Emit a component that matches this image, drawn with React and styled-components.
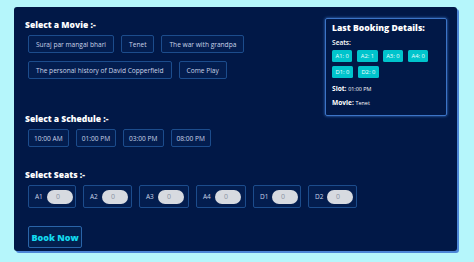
import React from 'react'
import styled, { createGlobalStyle } from 'styled-components'

const GlobalStyle = createGlobalStyle`
  html, body {
    margin: 0;
    padding: 0;
    background: #b5f6fb;
    font-family: "Open Sans", Inter, sans-serif;
  }
`

const Page = styled.div`
  padding: 7px 0 0 14px;
  width: 474px;
  height: 262px;
  box-sizing: border-box;
`

const Card = styled.div`
  width: 443px;
  height: 244px;
  box-sizing: border-box;
  background: #011847;
  border-radius: 3px;
  box-shadow: 2px 2px 0 #4d86d6;
  padding: 11px 10px 0 11px;
  display: flex;
  justify-content: space-between;
  align-items: flex-start;
  color: #fff;
`

const Main = styled.div`
  display: flex;
  flex-direction: column;
  width: 290px;
  flex-shrink: 0;
`

const Heading = styled.h3`
  margin: ${(p) => p.$top || 1}px 0 4px;
  font-size: 8.5px;
  line-height: 12px;
  font-weight: 800;
`

const Options = styled.div`
  display: flex;
  flex-wrap: wrap;
  gap: 8px 7px;
  padding-left: 3px;
  max-width: 230px;
`

const Option = styled.button`
  height: 18px;
  padding: 0 ${(p) => (p.$narrow ? 5 : 7)}px;
  background: #031d4f;
  border: 1px solid #1c4c8c;
  border-radius: 2px;
  color: #c9d3e8;
  font-family: inherit;
  font-size: 6.6px;
  white-space: nowrap;
  box-sizing: border-box;
`

const Seats = styled.div`
  display: flex;
  gap: 7px;
  padding-left: 3px;
`

const SeatBox = styled.div`
  width: ${(p) => p.$w}px;
  flex-shrink: 0;
  height: 23px;
  box-sizing: border-box;
  border: 1px solid #1c4c8c;
  border-radius: 2px;
  background: #031d4f;
  display: flex;
  align-items: center;
  padding-left: 6px;
  gap: 3px;
  font-size: 6.5px;
  color: #c9d3e8;
`

const SeatLabel = styled.span`
  width: 9px;
`

const SeatInput = styled.div`
  width: 26px;
  height: 14px;
  border-radius: 7px;
  background: #d7dae0;
  color: #8a93a4;
  font-size: 7px;
  line-height: 14px;
  padding-left: 9px;
  box-sizing: border-box;
`

const BookButton = styled.button`
  margin: 18px 0 0 3px;
  width: 54px;
  height: 22px;
  box-sizing: border-box;
  background: #03204f;
  border: 1px solid #2a64a8;
  border-radius: 2px;
  color: #13d9ee;
  font-family: inherit;
  font-weight: 800;
  font-size: 9px;
  padding: 0;
`

const Panel = styled.div`
  width: 122px;
  height: 98px;
  flex-shrink: 0;
  box-sizing: border-box;
  border: 1.5px solid #3c74c6;
  border-radius: 2px;
  box-shadow: 0 0 3px #3f7ad0;
  padding: 3px 6px;
`

const PanelTitle = styled.div`
  font-size: 8.6px;
  font-weight: 800;
  line-height: 13px;
`

const PanelLabel = styled.div`
  margin-top: 3px;
  font-size: 6.6px;
  line-height: 10px;
  font-weight: 600;
`

const Chips = styled.div`
  display: flex;
  flex-wrap: wrap;
  gap: 4px 5px;
  margin-top: 2px;
  width: 110px;
`

const Chip = styled.span`
  height: 12px;
  padding: 0 3.5px;
  background: #00c4cc;
  border-radius: 1.5px;
  font-size: 5.8px;
  line-height: 12px;
  color: #f2ffff;
`

const InfoRow = styled.div`
  margin-top: ${(p) => p.$top}px;
  font-size: 6.6px;
  line-height: 10px;
  font-weight: 700;

  span {
    font-weight: 400;
    font-size: 5.4px;
  }
`

const movies = [
  'Suraj par mangal bhari',
  'Tenet',
  'The war with grandpa',
  'The personal history of David Copperfield',
  'Come Play',
]

const slots = ['10:00 AM', '01:00 PM', '03:00 PM', '08:00 PM']

const seats = [
  ['A1', 48],
  ['A2', 49],
  ['A3', 50],
  ['A4', 50],
  ['D1', 48],
  ['D2', 49],
]

const booked = ['A1: 0', 'A2: 1', 'A3: 0', 'A4: 0', 'D1: 0', 'D2: 0']

export default function App() {
  return (
    <>
      <GlobalStyle />
      <Page>
        <Card>
          <Main>
            <Heading>Select a Movie :-</Heading>
            <Options>
              {movies.map((m) => (
                <Option key={m}>{m}</Option>
              ))}
            </Options>
            <Heading $top={34}>Select a Schedule :-</Heading>
            <Options>
              {slots.map((s) => (
                <Option key={s} $narrow>
                  {s}
                </Option>
              ))}
            </Options>
            <Heading $top={22}>Select Seats :-</Heading>
            <Seats>
              {seats.map(([s, w]) => (
                <SeatBox key={s} $w={w}>
                  <SeatLabel>{s}</SeatLabel>
                  <SeatInput>0</SeatInput>
                </SeatBox>
              ))}
            </Seats>
            <BookButton>Book Now</BookButton>
          </Main>
          <Panel>
            <PanelTitle>Last Booking Details:</PanelTitle>
            <PanelLabel>Seats:</PanelLabel>
            <Chips>
              {booked.map((b) => (
                <Chip key={b}>{b}</Chip>
              ))}
            </Chips>
            <InfoRow $top={6}>
              Slot: <span>01:00 PM</span>
            </InfoRow>
            <InfoRow $top={4}>
              Movie: <span>Tenet</span>
            </InfoRow>
          </Panel>
        </Card>
      </Page>
    </>
  )
}
